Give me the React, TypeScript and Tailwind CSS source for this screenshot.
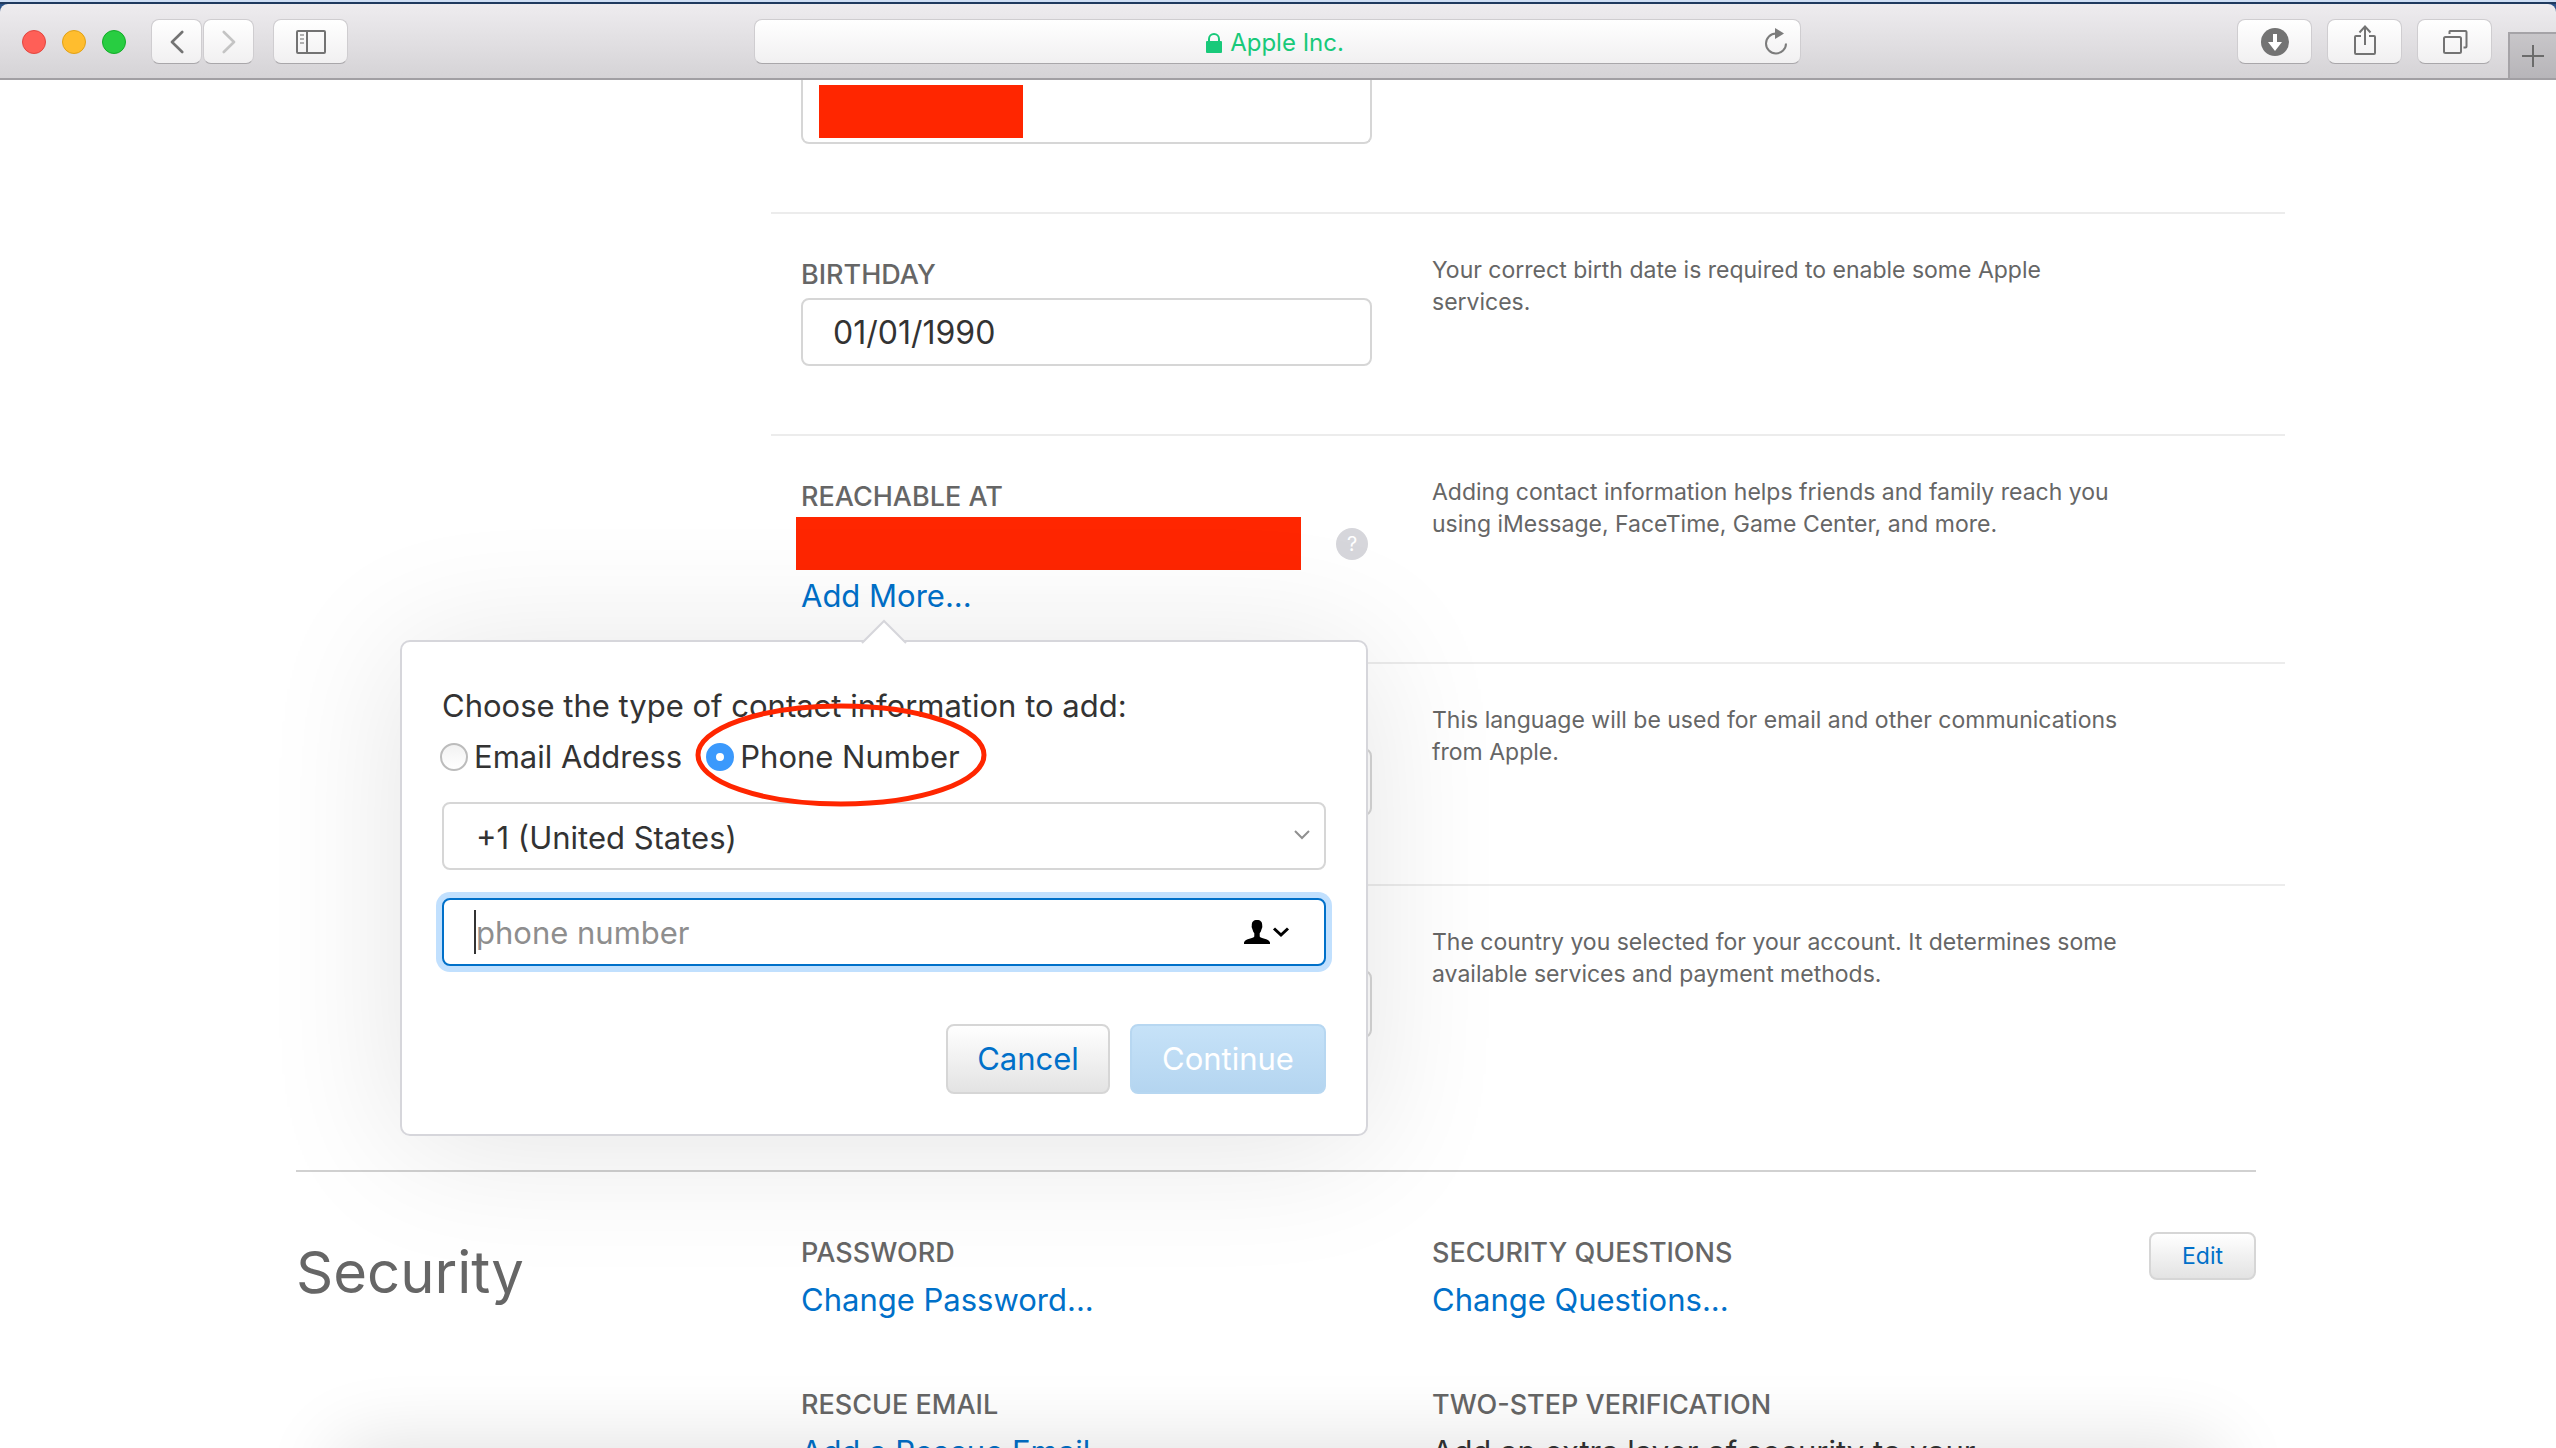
import type { ReactNode } from "react";

const toolButton =
  "flex h-[45px] items-center justify-center rounded-lg border border-[#cfcdd0] border-b-[#a9a7aa] bg-linear-to-b from-white to-[#f1f0f1] text-[#737373]";
const fieldBox = "h-[68px] w-full rounded-lg border-2 border-[#d6d6d6] bg-white text-[#333333]";

function TitleBar() {
  return (
    <header className="relative z-20 flex h-20 shrink-0 flex-col bg-[#2a5389]">
      <div className="h-0.5 bg-[#cfdff5]" />
      <div className="h-0.5 bg-[#1f3a5f]" />
      <div className="flex flex-1 items-center rounded-t-lg border-b-2 border-[#a19fa3] bg-linear-to-b from-[#eeecef] to-[#d5d3d6] pt-px">
        <div className="flex items-center gap-4 pl-[22px]">
          <button aria-label="Close" className="size-6 rounded-full border border-[#e2463f] bg-[#ff5f57]" />
          <button aria-label="Minimize" className="size-6 rounded-full border border-[#e1a116] bg-[#ffbd2e]" />
          <button aria-label="Zoom" className="size-6 rounded-full border border-[#12ac28] bg-[#28cd41]" />
        </div>
        <div className="ml-[25px] flex gap-px">
          <button aria-label="Back" className={`${toolButton} w-[51px]`}>
            <svg width="14" height="24" viewBox="0 0 14 24" fill="none" stroke="currentColor" strokeWidth="2.6" strokeLinecap="round" strokeLinejoin="round">
              <path d="M12.200 2 2 12l10.200 10" />
            </svg>
          </button>
          <button aria-label="Forward" className={`${toolButton} w-[51px]`}>
            <svg className="text-[#c4c4c4]" width="14" height="24" viewBox="0 0 14 24" fill="none" stroke="currentColor" strokeWidth="2.6" strokeLinecap="round" strokeLinejoin="round">
              <path d="M1.800 2 12 12 1.800 22" />
            </svg>
          </button>
        </div>
        <button aria-label="Show sidebar" className={`${toolButton} ml-[19px] w-[75px]`}>
          <svg width="30" height="24" viewBox="0 0 30 24" fill="none" stroke="currentColor" strokeWidth="2">
            <rect x="1" y="1" width="28" height="22" rx="1" />
            <path d="M11 1v22" />
            <path d="M4 5h4M4 9h4M4 13h4" strokeWidth="1.600" stroke="#999" />
          </svg>
        </button>
        <div className="flex flex-1 justify-center pl-[69px] pr-[100px]">
          <div className={`${toolButton} w-[1047px]`}>
            <span className="flex-1 pl-2" />
            <span className="flex items-center gap-2 pt-0.5 text-[#18c97a]">
              <svg width="16" height="20" viewBox="0 0 16 20">
                <rect y="8" width="16" height="12" rx="1" fill="currentColor" />
                <path d="M3 9V6a5 5 0 0 1 10 0v3" fill="none" stroke="currentColor" strokeWidth="2" />
              </svg>
              <span className="text-[24px] leading-8">Apple Inc.</span>
            </span>
            <span className="flex flex-1 justify-end pr-3">
              <button aria-label="Reload" className="flex">
                <svg width="24" height="28" viewBox="0 0 24 28" fill="none">
                  <path d="M12 5.500a10 10 0 1 0 10 10" stroke="#7c7c7c" strokeWidth="2" />
                  <path d="M11 0 20 5.500 11 11z" fill="#7c7c7c" />
                </svg>
              </button>
            </span>
          </div>
        </div>
        <div className="flex gap-[15px] pr-4">
          <button aria-label="Downloads" className={`${toolButton} w-[75px]`}>
            <svg width="28" height="28" viewBox="0 0 28 28">
              <circle cx="14" cy="14" r="14" fill="currentColor" />
              <path d="M12 6h4v8h5l-7 9-7-9h5z" fill="#fff" />
            </svg>
          </button>
          <button aria-label="Share" className={`${toolButton} w-[75px]`}>
            <svg className="-mt-1" width="24" height="32" viewBox="0 0 24 32" fill="none" stroke="currentColor" strokeWidth="2">
              <path d="M8 12H3a1 1 0 0 0-1 1v16a1 1 0 0 0 1 1h18a1 1 0 0 0 1-1V13a1 1 0 0 0-1-1h-5" />
              <path d="M12 21V2.500M6.500 8.500 12 2.500l5.500 6" />
            </svg>
          </button>
          <button aria-label="Show all tabs" className={`${toolButton} w-[75px]`}>
            <svg width="26" height="26" viewBox="0 0 26 26" fill="none" stroke="currentColor" strokeWidth="2">
              <rect x="2" y="8" width="17" height="16" rx="1.500" />
              <path d="M7.500 5V2.500A.5.500 0 0 1 8 2h15.500a1 1 0 0 1 1 1v14.500a1 1 0 0 1-1 1H21.500" />
            </svg>
          </button>
        </div>
        <button aria-label="New tab" className="flex h-[46px] w-12 items-center justify-center self-end border-t-2 border-l-2 border-[#a5a3a7] bg-linear-to-b from-[#c8c6c9] to-[#b7b5b9] text-[#6b6b6b]">
          <svg width="22" height="22" viewBox="0 0 22 22" stroke="currentColor" strokeWidth="2">
            <path d="M11 0v22M0 11h22" />
          </svg>
        </button>
      </div>
    </header>
  );
}

function FormRow({ label, help, className, children }: { label: ReactNode; help: string; className: string; children: ReactNode }) {
  return (
    <section className={`ml-[475px] mr-[-29px] flex border-t-2 border-[#ececec] pl-[30px] ${className}`}>
      <div className="w-[571px] pt-[45px]">
        {label}
        {children}
      </div>
      <p className="ml-[60px] w-[710px] pt-10 text-[23px] leading-8 text-[#666666]">{help}</p>
    </section>
  );
}

const labelText = "block text-[27px] leading-8 font-medium text-[#666666]";
const linkText = "text-[31px] leading-10 text-[#0070c9]";

function AddContactPopover() {
  return (
    <form className="absolute top-16 left-1/2 z-10 w-[968px] -translate-x-1/2 rounded-[10px] border-2 border-[#d6d6db] bg-white px-10 pt-11 pb-10 text-[31px] text-[#333333] shadow-[0_10px_140px_rgba(0,0,0,0.11)]">
      <svg className="absolute -top-[23px] left-1/2 -translate-x-1/2" width="48" height="25" viewBox="0 0 48 25">
        <path d="M2 25 24 2l22 23z" fill="#fff" />
        <path d="M2 24 24 2l22 22" fill="none" stroke="#d6d6db" strokeWidth="2" />
      </svg>
      <fieldset>
        <legend className="leading-10">Choose the type of contact information to add:</legend>
        <div className="mt-[11px] -ml-0.5 flex leading-10">
          <label className="flex items-center gap-1.5">
            <input type="radio" name="kind" className="size-7 appearance-none rounded-full border-2 border-[#bcbcbc] bg-white bg-linear-to-b from-[#f2f2f2] to-white" />
            Email Address
          </label>
          <label className="relative z-10 ml-6 flex items-center gap-1.5">
            <input type="radio" name="kind" defaultChecked className="size-7 appearance-none rounded-full border-10 border-[#3b99fc] bg-white" />
            Phone Number
            <svg className="pointer-events-none absolute top-1/2 left-1/2 -mt-0.5 ml-2 -translate-x-1/2 -translate-y-1/2" width="292" height="104" viewBox="0 0 292 104">
              <ellipse cx="146" cy="52" rx="143" ry="49" fill="none" stroke="#ff2600" strokeWidth="5" />
            </svg>
          </label>
        </div>
      </fieldset>
      <div className="relative mt-[25px]">
        <select aria-label="Country code" className={`${fieldBox} appearance-none pt-1 pl-8`}>
          <option>+1 (United States)</option>
        </select>
        <svg className="pointer-events-none absolute top-7 right-4" width="16" height="10" viewBox="0 0 16 10" fill="none" stroke="#909090" strokeWidth="2">
          <path d="m1 1 7 7 7-7" />
        </svg>
      </div>
      <div className="relative mt-7">
        <input aria-label="Phone number" placeholder="phone number" className="h-[68px] w-full rounded-lg border-2 border-[#0070c9] bg-white px-8 shadow-[0_0_0_6px_#c1e0fe] outline-none placeholder:text-[#8e8e8e]" />
        <span className="absolute top-3 left-8 h-11 w-0.5 bg-[#333333]" />
        <button type="button" aria-label="Choose from contacts" className="absolute top-[22px] right-9 flex items-center gap-0.5">
          <svg width="26" height="24" viewBox="0 0 26 24">
            <path d="M13 0c-3.600 0-5.300 2-5.200 5 0 1.200-.3 1.500 0 2.600.2.900.5 1.300.8 2.100.3 1.600.9 2.800 1.700 3.600v3.200C9.500 19 1.500 18 0 22.500V24h26v-1.500C24.500 18 16.500 19 15.700 16.500v-3.200c.8-.8 1.400-2 1.700-3.600.3-.8.6-1.200.8-2.100.3-1.100 0-1.400 0-2.600C18.300 2 16.600 0 13 0z" />
          </svg>
          <svg width="18" height="12" viewBox="0 0 18 12" fill="none" stroke="#000" strokeWidth="3">
            <path d="m2 2.500 7 6.500 7-6.500" />
          </svg>
        </button>
      </div>
      <div className="mt-[58px] flex justify-end gap-5">
        <button type="button" className="h-[70px] w-[164px] rounded-lg border-2 border-[#d6d6d6] bg-linear-to-b from-white to-[#e3e3e3] text-[#0070c9]">Cancel</button>
        <button type="submit" className="h-[70px] w-[196px] rounded-lg border-2 border-[#b7d7f1] bg-linear-to-b from-[#c6e2f8] to-[#b4d5f0] text-white">Continue</button>
      </div>
    </form>
  );
}

export default function App() {
  return (
    <div className="relative flex h-screen flex-col overflow-hidden bg-white font-['Inter','Liberation_Sans',sans-serif]">
      <TitleBar />
      <main className="mr-[300px] ml-[296px] min-h-0 flex-1">
        <div className="ml-[505px] flex h-[132px] w-[571px]">
          <div className="relative h-16 w-full">
            <input aria-label="Name" className="h-16 w-full rounded-b-lg border-2 border-t-0 border-[#d6d6d6]" />
            <span className="absolute top-[5px] left-[18px] h-[53px] w-[204px] bg-[#ff2600]" />
          </div>
        </div>
        <FormRow
          className="h-[222px]"
          label={<label htmlFor="birthday" className={labelText}>BIRTHDAY</label>}
          help="Your correct birth date is required to enable some Apple services."
        >
          <input id="birthday" defaultValue="01/01/1990" className={`${fieldBox} mt-[7px] px-[30px] text-[32px]`} />
        </FormRow>
        <FormRow
          className="h-[228px]"
          label={<h3 className={labelText}>REACHABLE AT</h3>}
          help="Adding contact information helps friends and family reach you using iMessage, FaceTime, Game Center, and more."
        >
          <div className="mt-1 flex items-center justify-between pr-1">
            <span className="-ml-[5px] h-[53px] w-[505px] bg-[#ff2600]" />
            <button aria-label="Help" className="size-8 rounded-full bg-[#d6d6db] text-[20px] leading-8 text-white">?</button>
          </div>
          <div className="relative mt-1.5 w-[166px]">
            <a href="#add" className={`${linkText} block whitespace-nowrap`}>Add More...</a>
            <AddContactPopover />
          </div>
        </FormRow>
        <FormRow
          className="h-[222px]"
          label={<label htmlFor="language" className="block h-8" aria-label="Language" />}
          help="This language will be used for email and other communications from Apple."
        >
          <input id="language" className={`${fieldBox} mt-[7px]`} />
        </FormRow>
        <FormRow
          className="h-[286px]"
          label={<label htmlFor="country" className="block h-8" aria-label="Country" />}
          help="The country you selected for your account. It determines some available services and payment methods."
        >
          <input id="country" className={`${fieldBox} mt-[7px]`} />
        </FormRow>
        <section className="flex border-t-2 border-[#d1d1d1] pt-[60px]">
          <h2 className="w-[505px] pt-1 text-[58px] leading-[72px] text-[#666666]">Security</h2>
          <div className="grid flex-1 grid-cols-[631px_1fr] gap-y-[69px] pt-[5px]">
            <div>
              <h3 className={labelText}>PASSWORD</h3>
              <a href="#password" className={`${linkText} mt-[11px] block`}>Change Password...</a>
            </div>
            <div className="relative">
              <h3 className={labelText}>SECURITY QUESTIONS</h3>
              <a href="#questions" className={`${linkText} mt-[11px] block`}>Change Questions...</a>
              <button className="absolute -top-[5px] right-0 h-12 w-[107px] rounded-lg border-2 border-[#d6d6d6] bg-linear-to-b from-white to-[#e3e3e3] text-[23px] text-[#0070c9]">Edit</button>
            </div>
            <div>
              <h3 className={labelText}>RESCUE EMAIL</h3>
              <a href="#rescue" className={`${linkText} mt-[11px] block`}>Add a Rescue Email...</a>
            </div>
            <div>
              <h3 className={labelText}>TWO-STEP VERIFICATION</h3>
              <p className="mt-[11px] text-[31px] leading-10 text-[#333333]">Add an extra layer of security to your</p>
            </div>
          </div>
        </section>
      </main>
      <div className="pointer-events-none absolute inset-x-[340px] top-full h-20 shadow-[0_0_80px_rgba(0,0,0,0.14)]" />
    </div>
  );
}
